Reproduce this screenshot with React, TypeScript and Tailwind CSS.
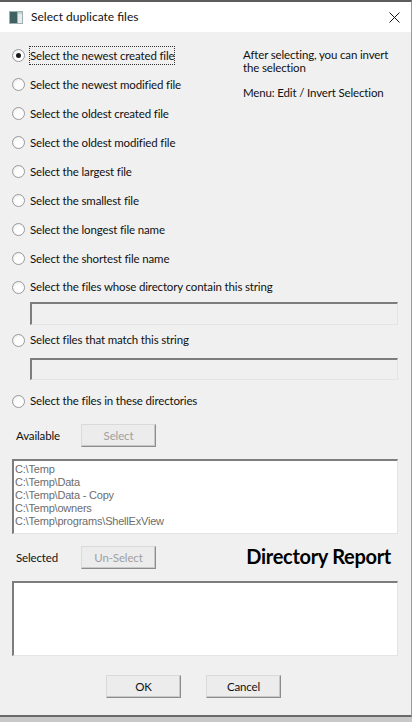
import React from 'react'

const UI = 'Lato, "Open Sans", "Liberation Sans", sans-serif'
const LIST = '"Liberation Sans", Arial, sans-serif'

const options = [
  'Select the newest created file',
  'Select the newest modified file',
  'Select the oldest created file',
  'Select the oldest modified file',
  'Select the largest file',
  'Select the smallest file',
  'Select the longest file name',
  'Select the shortest file name',
]

const dirs = ['C:\\Temp', 'C:\\Temp\\Data', 'C:\\Temp\\Data - Copy', 'C:\\Temp\\owners', 'C:\\Temp\\programs\\ShellExView']

function Radio({ checked = false }: { checked?: boolean }) {
  return (
    <span className="flex h-[13px] w-[13px] shrink-0 items-center justify-center rounded-full border border-[#9a9a9a] bg-[radial-gradient(circle_at_60%_60%,#ffffff_40%,#e2e2e2_100%)]">
      {checked && <span className="h-[5px] w-[5px] rounded-full bg-[#1a1a1a]" />}
    </span>
  )
}

function RadioRow({ label, checked, className = 'h-[29px]' }: { label: string; checked?: boolean; className?: string }) {
  return (
    <div className={`flex items-center gap-[5px] pl-[12px] ${className}`}>
      <Radio checked={checked} />
      <span className={checked ? 'outline outline-1 outline-dotted outline-[#333] outline-offset-0' : ''}>{label}</span>
    </div>
  )
}

function WinButton({ label, disabled }: { label: string; disabled?: boolean }) {
  return (
    <div
      className={`flex h-[23px] w-[75px] items-center justify-center border border-t-[#dadada] border-l-[#dadada] border-r-[#8c8c8c] border-b-[#8c8c8c] bg-[#ececec] shadow-[inset_-1px_-1px_0_#c8c8c8] ${
        disabled ? 'text-[#a0a0a0]' : 'text-[#111]'
      }`}
    >
      {label}
    </div>
  )
}

function SunkenBox({ className, children }: { className: string; children?: React.ReactNode }) {
  return (
    <div className={`border-t-2 border-l-2 border-r border-b border-t-[#7d7d7d] border-l-[#7d7d7d] border-r-[#e4e4e4] border-b-[#e4e4e4] ${className}`}>
      {children}
    </div>
  )
}

export default function App() {
  return (
    <div className="flex h-[722px] w-[412px] flex-col bg-[#c9c9c9] text-[11.5px] tracking-[-0.15px] text-[#111]" style={{ fontFamily: UI }}>
      <div className="flex h-[717px] flex-col border-t-2 border-r border-b-2 border-t-[#5c5c5c] border-r-[#9a9a9a] border-b-[#6a6a6a] bg-[#f0f0f0]">
        {/* Title bar */}
        <div className="flex h-[30px] shrink-0 items-center bg-white pl-[9px] pr-[11px]">
          <svg width="14" height="13" viewBox="0 0 14 13" className="shrink-0">
            <rect x="0" y="0" width="14" height="13" fill="#9fb0b0" />
            <rect x="1" y="1" width="7" height="11" fill="#3e6262" />
            <rect x="9" y="1" width="4" height="11" fill="#e8ecec" />
            <rect x="9" y="1" width="4" height="2" fill="#c7d0d0" />
          </svg>
          <span className="ml-[8px] flex-1 text-[12px] tracking-normal text-[#111]">Select duplicate files</span>
          <svg width="11" height="11" viewBox="0 0 11 11">
            <path d="M0.5 0.5 L10.5 10.5 M10.5 0.5 L0.5 10.5" stroke="#111" strokeWidth="1" />
          </svg>
        </div>

        <div className="flex flex-1 flex-col pt-[9px]">
          <div className="flex">
            <div className="flex w-[243px] flex-col">
              {options.map((o, i) => (
                <RadioRow key={o} label={o} checked={i === 0} />
              ))}
            </div>
            <div className="flex flex-col pt-[8px] leading-[12.5px]">
              <span>After selecting, you can invert</span>
              <span>the selection</span>
              <span className="mt-[13px]">Menu: Edit / Invert Selection</span>
            </div>
          </div>

          <RadioRow label="Select the files whose directory contain this string" className="h-[30px] -mt-px" />
          <SunkenBox className="ml-[30px] h-[23px] w-[368px] bg-[#f0f0f0]" />
          <RadioRow label="Select files that match this string" className="h-[30px]" />
          <SunkenBox className="ml-[30px] mt-[3px] h-[22px] w-[368px] bg-[#f0f0f0]" />
          <RadioRow label="Select the files in these directories" className="h-[42px]" />

          <div className="mt-[2px] flex h-[23px] items-center pl-[16px]">
            <span className="w-[65px]">Available</span>
            <WinButton label="Select" disabled />
          </div>

          <SunkenBox className="ml-[12px] mt-[12px] h-[75px] w-[386px] bg-white">
            <div className="flex flex-col pl-[1px] pt-[2px] text-[11px] leading-[13px] tracking-[-0.2px] text-[#6d6d6d]" style={{ fontFamily: LIST }}>
              {dirs.map((d) => (
                <span key={d}>{d}</span>
              ))}
            </div>
          </SunkenBox>

          <div className="mt-[12px] flex h-[23px] items-center pl-[16px] pr-[20px]">
            <span className="w-[65px]">Selected</span>
            <WinButton label="Un-Select" disabled />
            <span className="ml-auto -mt-[4px] text-[20px] font-bold tracking-[-0.3px] text-black" style={{ fontFamily: 'Lato, "Liberation Sans", sans-serif' }}>
              Directory Report
            </span>
          </div>

          <SunkenBox className="ml-[12px] mt-[12px] h-[75px] w-[386px] bg-white" />

          <div className="mt-[19px] flex gap-[25px] pl-[106px]">
            <WinButton label="OK" />
            <WinButton label="Cancel" />
          </div>
        </div>
      </div>
    </div>
  )
}
